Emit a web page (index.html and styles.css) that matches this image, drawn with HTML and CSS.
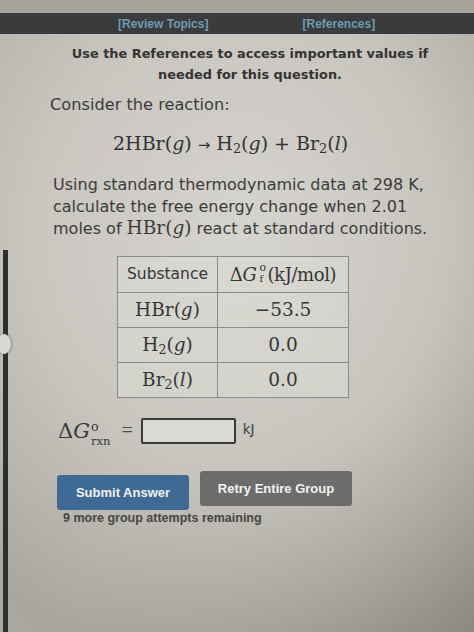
FILE: index.html
```html
<!DOCTYPE html>
<html>
<head>
<meta charset="utf-8">
<link rel="stylesheet" href="styles.css">
</head>
<body>
<div class="page">
  <div class="topstrip"></div>
  <div class="bar">
    <span class="link">[Review Topics]</span>
    <span class="link">[References]</span>
  </div>
  <div class="notice">Use the References to access important values if<br>needed for this question.</div>
  <div class="content">
    <p class="consider">Consider the reaction:</p>
    <div class="equation m">2HBr(<i>g</i>)<span class="op arrow">&rarr;</span>H<sub>2</sub>(<i>g</i>)<span class="op">+</span>Br<sub>2</sub>(<i>l</i>)</div>
    <p class="para">Using standard thermodynamic data at 298 K,<br>calculate the free energy change when 2.01<br>moles of <span class="m">HBr(<i>g</i>)</span> react at standard conditions.</p>
    <table class="data">
      <tr><td class="sub head">Substance</td><td class="val head m">&Delta;<i>G</i><span class="supsub"><span class="sp">o</span><span class="sb">f</span></span>(kJ/mol)</td></tr>
      <tr><td class="sub m">HBr(<i>g</i>)</td><td class="val m">&minus;53.5</td></tr>
      <tr><td class="sub m">H<sub>2</sub>(<i>g</i>)</td><td class="val m">0.0</td></tr>
      <tr><td class="sub m">Br<sub>2</sub>(<i>l</i>)</td><td class="val m">0.0</td></tr>
    </table>
    <div class="answer">
      <span class="dg m">&Delta;<i>G</i><span class="supsub"><span class="sp">o</span><span class="sb">rxn</span></span></span>
      <span class="eq">=</span>
      <span class="box"></span>
      <span class="unit">kJ</span>
    </div>
    <div class="buttons">
      <button class="btn submit">Submit Answer</button>
      <button class="btn retry">Retry Entire Group</button>
    </div>
    <p class="remain">9 more group attempts remaining</p>
  </div>
  <div class="edge"></div>
</div>
</body>
</html>
```
FILE: styles.css
```css
html, body {
  margin: 0;
  padding: 0;
}
body {
  width: 474px;
  height: 632px;
  overflow: hidden;
}
.page {
  position: relative;
  width: 474px;
  height: 632px;
  background:
    radial-gradient(ellipse 540px 600px at 240px 240px, rgba(214,212,206,1) 0%, rgba(202,200,193,0.92) 38%, rgba(165,162,154,0.6) 72%, rgba(120,116,108,0) 100%),
    linear-gradient(120deg, #b9b8b1 0%, #adaba2 50%, #77736b 100%);
  color: #3b3b3b;
  font-family: "DejaVu Sans", Verdana, sans-serif;
}
.topstrip {
  height: 13px;
  background: #a6a49d;
}
.bar {
  height: 21px;
  background: #3a3b3d;
  display: flex;
  align-items: center;
  padding-left: 118px;
  gap: 94px;
}
.link {
  font-family: "Liberation Sans", Arial, sans-serif;
  font-weight: bold;
  font-size: 12px;
  color: #6e9cb3;
}
.notice {
  margin-top: 9px;
  padding-left: 26px;
  text-align: center;
  font-weight: bold;
  font-size: 12.9px;
  line-height: 21px;
  color: #343434;
}
.content {
  padding-left: 50px;
}
.consider {
  margin: 9px 0 0 0;
  font-size: 16.2px;
  line-height: 22px;
}
.m {
  font-family: "DejaVu Serif", "Liberation Serif", serif;
  font-size: 18.5px;
}
.m i {
  font-style: italic;
}
.equation {
  margin-top: 15px;
  padding-left: 63px;
  font-size: 19px;
  line-height: 24px;
  color: #333;
  white-space: nowrap;
}
.op {
  display: inline-block;
  margin: 0 6px;
}
.arrow {
  font-family: "DejaVu Sans", sans-serif;
  font-size: 15px;
}
.equation sub, .data sub {
  font-size: 0.68em;
  vertical-align: -0.25em;
  line-height: 0;
}
.para {
  margin: 17px 0 0 3px;
  font-size: 16px;
  line-height: 21.5px;
}
.para .m {
  font-size: 18.5px;
}
.data {
  margin: 16px 0 0 67px;
  border-collapse: collapse;
  border: 1.5px solid #7b7b78;
  background: rgba(222,221,216,0.45);
}
.data td {
  border: 1.5px solid #8a8a86;
  height: 34px;
  padding: 0;
  color: #363636;
}
.data td.sub {
  width: 93px;
  text-align: center;
}
.data td.val {
  width: 126px;
  text-align: center;
}
.data td.head {
  height: 35px;
}
.data td.sub.head {
  font-family: "DejaVu Sans", sans-serif;
  font-size: 15.5px;
  padding: 0 3px;
}
.data td.val.head {
  font-size: 18px;
  white-space: nowrap;
  padding: 0 2px;
  letter-spacing: -0.4px;
}
.supsub {
  display: inline-flex;
  flex-direction: column;
  align-items: flex-start;
  vertical-align: middle;
  line-height: 1;
  margin-left: 3px;
  margin-right: 2px;
  margin-top: -4px;
}
.sp {
  font-size: 0.6em;
}
.sb {
  font-size: 0.55em;
}
.answer {
  margin-top: 18px;
  margin-left: 8px;
  display: flex;
  align-items: center;
  height: 30px;
}
.dg {
  font-size: 21px;
  display: inline-flex;
  align-items: center;
}
.dg .supsub {
  margin-top: 8px;
  margin-left: 1px;
}
.dg .sb {
  font-size: 0.55em;
  margin-top: 2px;
}
.eq {
  font-family: "Liberation Serif", serif;
  font-size: 20px;
  margin-left: 9px;
  color: #4a4a4a;
}
.box {
  margin-left: 8px;
  width: 91px;
  height: 22px;
  border: 2px solid #3a3a3a;
  border-radius: 2px;
  background: rgba(226,225,220,0.7);
}
.unit {
  margin-left: 7px;
  font-size: 13.5px;
  margin-top: -4px;
}
.buttons {
  margin-top: 27px;
  margin-left: 7px;
  display: flex;
  gap: 11px;
}
.btn {
  border: none;
  border-radius: 3px;
  color: #f2f2f2;
  font-family: "Liberation Sans", Arial, sans-serif;
  font-weight: bold;
  font-size: 13px;
  height: 35px;
  padding: 0;
}
.submit {
  width: 132px;
  background: #3e6a93;
  margin-top: 2px;
}
.retry {
  width: 152px;
  background: #6c6c6b;
  margin-top: -2px;
}
.remain {
  margin: 1px 0 0 13px;
  font-family: "Liberation Sans", Arial, sans-serif;
  font-weight: bold;
  font-size: 12.5px;
  color: #454545;
}
.edge {
  position: absolute;
  left: 3px;
  top: 250px;
  width: 5px;
  height: 382px;
  background: #2e2f30;
}
.edge::after {
  content: "";
  position: absolute;
  left: -6px;
  top: 84px;
  width: 14px;
  height: 20px;
  border-radius: 50%;
  background: #d8d8d6;
  box-shadow: 0 0 3px #555;
}
```
